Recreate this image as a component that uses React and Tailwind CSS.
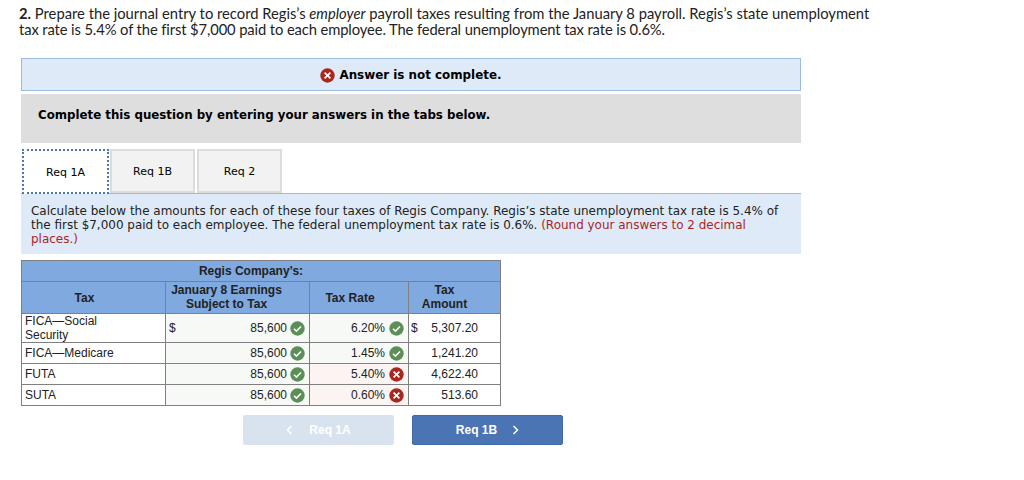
import React from "react";

const ROWS = [
  { tax: "FICA—Social Security", base: "85,600", rate: "6.20%", rateOk: true, amount: "5,307.20", dollar: true, tall: true },
  { tax: "FICA—Medicare", base: "85,600", rate: "1.45%", rateOk: true, amount: "1,241.20" },
  { tax: "FUTA", base: "85,600", rate: "5.40%", rateOk: false, amount: "4,622.40" },
  { tax: "SUTA", base: "85,600", rate: "0.60%", rateOk: false, amount: "513.60" },
];

function Mark({ ok }) {
  return (
    <svg width="15" height="15" viewBox="0 0 15 15" className="shrink-0">
      <circle cx="7.5" cy="7.5" r="7.2" fill={ok ? "#5c8f58" : "#a9271f"} />
      {ok ? (
        <path d="M4 7.8l2.4 2.3L11 5.4" fill="none" stroke="#fff" strokeWidth="1.5" />
      ) : (
        <path d="M4.6 4.6l5.8 5.8M10.4 4.6l-5.8 5.8" fill="none" stroke="#fff" strokeWidth="1.7" />
      )}
    </svg>
  );
}

function Tab({ label, active }) {
  if (active) {
    return (
      <div className="w-[87px] h-[45px] -mb-px pt-[3px] flex items-center justify-center bg-white border-2 border-dotted border-[#4a76b8] text-[11px] text-black">
        {label}
      </div>
    );
  }
  return (
    <div className="w-[85px] h-[44px] pt-[3px] flex items-center justify-center bg-[#f2f2f2] border-2 border-[#dcdcdc] text-[11px] text-black">
      {label}
    </div>
  );
}

export default function App() {
  return (
    <div className="w-[1024px] h-[480px] bg-white overflow-hidden text-black font-['Liberation_Sans',sans-serif]">
      <p className="pl-[19px] pt-[5px] w-[900px] text-[14.76px] leading-[16px] text-[#222] font-['Lato',sans-serif]">
        <b>2.</b> Prepare the journal entry to record Regis’s <i>employer</i> payroll taxes resulting from the January 8 payroll. Regis’s state unemployment
        <br />
        <span className="tracking-[-0.11px]">tax rate is 5.4% of the first $7,000 paid to each employee. The federal unemployment tax rate is 0.6%.</span>
      </p>

      <div className="ml-[21px] mt-[21px] w-[780px] font-['DejaVu_Sans',sans-serif]">
        <div className="h-[33px] pt-[2px] flex items-center justify-center gap-[4px] bg-[#deeaf8] border border-[#9dbce0] text-[11.9px] font-bold">
          <Mark ok={false} />
          <span>Answer is not complete.</span>
        </div>
        <div className="mt-[3px] h-[49px] pb-[5px] flex items-center pl-[17px] bg-[#dedede] text-[11.8px] font-bold">
          Complete this question by entering your answers in the tabs below.
        </div>

        <div className="mt-[6px] pl-[1px] flex items-end">
          <Tab label="Req 1A" active />
          <div className="w-[1px]" />
          <Tab label="Req 1B" />
          <div className="w-[2px]" />
          <Tab label="Req 2" />
        </div>
        <div className="h-[61px] border-t border-[#b5b5b5] bg-[#deeaf8] pl-[10px] pt-[10px] text-[11.97px] leading-[14px] text-[#222]">
          Calculate below the amounts for each of these four taxes of Regis Company. Regis’s state unemployment tax rate is 5.4% of
          <br />
          the first $7,000 paid to each employee. The federal unemployment tax rate is 0.6%. <span className="text-[#a9271f]">(Round your answers to 2 decimal</span>
          <br />
          <span className="text-[#a9271f]">places.)</span>
        </div>
      </div>

      <table className="ml-[21px] mt-[6px] w-[479px] table-fixed border-collapse text-[12px] leading-[14px] text-[#222]">
        <colgroup>
          <col className="w-[144px]" />
          <col className="w-[144px]" />
          <col className="w-[99px]" />
          <col className="w-[92px]" />
        </colgroup>
        <thead>
          <tr className="h-[21px] bg-[#7fa9df]">
            <th colSpan={4} className="border border-[#808080] pr-[20px] text-center font-bold">
              Regis Company’s:
            </th>
          </tr>
          <tr className="h-[32px] bg-[#7fa9df]">
            <th className="border border-[#808080] font-bold pr-[18px]">Tax</th>
            <th className="border border-[#808080] font-bold pr-[22px] pb-[2px]">January 8 Earnings<br />Subject to Tax</th>
            <th className="border border-[#808080] font-bold pr-[18px]">Tax Rate</th>
            <th className="border border-[#808080] font-bold pr-[20px] pb-[2px]">Tax<br />Amount</th>
          </tr>
        </thead>
        <tbody>
          {ROWS.map((r) => (
            <tr key={r.tax} className={r.tall ? "h-[29px]" : "h-[21px]"}>
              <td className="border border-[#808080] pl-[3px] pr-[30px]">{r.tax}</td>
              <td className="border border-[#808080] bg-[#f6f9f5] pl-[3px] pr-[4px]">
                <div className="flex items-center justify-between">
                  <span>{r.tall ? "$" : ""}</span>
                  <span className="flex items-center gap-[3px]">
                    {r.base}
                    <Mark ok />
                  </span>
                </div>
              </td>
              <td className={`border border-[#808080] pr-[4px] ${r.rateOk ? "bg-[#f6f9f5]" : "bg-[#fcf4f3]"}`}>
                <div className="flex items-center justify-end gap-[4px]">
                  {r.rate}
                  <Mark ok={r.rateOk} />
                </div>
              </td>
              <td className="border border-[#808080] pl-[2px] pr-[22px]">
                <div className="flex items-center justify-between">
                  <span>{r.dollar ? "$" : ""}</span>
                  <span>{r.amount}</span>
                </div>
              </td>
            </tr>
          ))}
        </tbody>
      </table>

      <div className="ml-[243px] mt-[9px] flex gap-[18px] text-[12px] font-bold text-white">
        <div className="w-[151px] h-[30px] flex items-center justify-center gap-[16px] rounded-[2px] bg-[#d9e3f0]">
          <svg width="7" height="10" viewBox="0 0 7 10"><path d="M5.5 1L1.5 5l4 4" fill="none" stroke="#fff" strokeWidth="1.5" /></svg>
          <span>Req 1A</span>
        </div>
        <div className="w-[151px] h-[30px] flex items-center justify-center gap-[15px] rounded-[2px] bg-[#4a74b4] border border-[#4069a8]">
          <span>Req 1B</span>
          <svg width="7" height="10" viewBox="0 0 7 10"><path d="M1.5 1l4 4-4 4" fill="none" stroke="#fff" strokeWidth="1.5" /></svg>
        </div>
      </div>
    </div>
  );
}
